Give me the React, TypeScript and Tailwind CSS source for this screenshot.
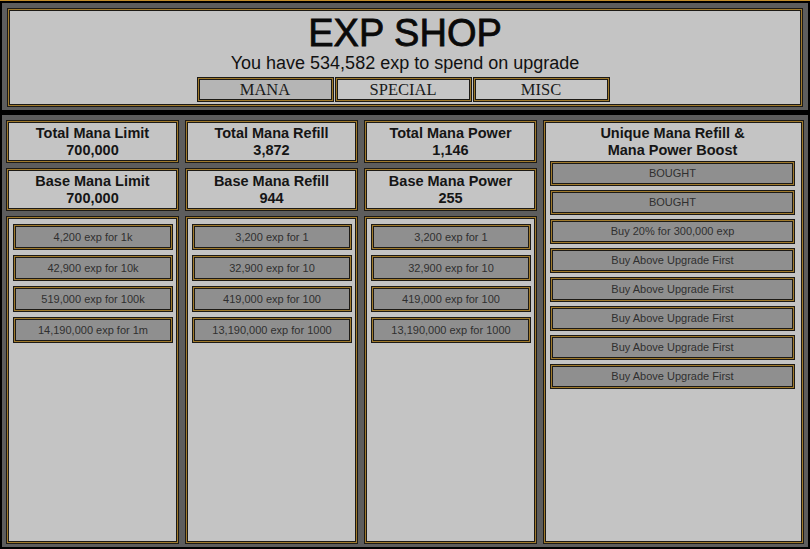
import React from "react";

const frame =
  "border border-[#1c1a16] shadow-[inset_0_0_0_1px_#a07a2c,inset_0_0_0_2px_#1c1a16]";

const columns = [
  {
    total: ["Total Mana Limit", "700,000"],
    base: ["Base Mana Limit", "700,000"],
    buys: ["4,200 exp for 1k", "42,900 exp for 10k", "519,000 exp for 100k", "14,190,000 exp for 1m"],
  },
  {
    total: ["Total Mana Refill", "3,872"],
    base: ["Base Mana Refill", "944"],
    buys: ["3,200 exp for 1", "32,900 exp for 10", "419,000 exp for 100", "13,190,000 exp for 1000"],
  },
  {
    total: ["Total Mana Power", "1,146"],
    base: ["Base Mana Power", "255"],
    buys: ["3,200 exp for 1", "32,900 exp for 10", "419,000 exp for 100", "13,190,000 exp for 1000"],
  },
];

const unique = [
  "BOUGHT",
  "BOUGHT",
  "Buy 20% for 300,000 exp",
  "Buy Above Upgrade First",
  "Buy Above Upgrade First",
  "Buy Above Upgrade First",
  "Buy Above Upgrade First",
  "Buy Above Upgrade First",
];

function StatBox({ label, value }: { label: string; value: string }) {
  return (
    <div
      className={`${frame} bg-[#c4c4c4] h-[43px] flex flex-col items-center justify-center pt-px text-[14.5px] font-bold leading-[17px] text-[#151515]`}
    >
      <span>{label}</span>
      <span>{value}</span>
    </div>
  );
}

function BuyButton({ text, h }: { text: string; h: string }) {
  return (
    <button
      className={`${frame} bg-[#8f8f8f] ${h} w-full flex items-center justify-center text-[11px] text-[#2f2f2f]`}
    >
      {text}
    </button>
  );
}

export default function App() {
  return (
    <div
      className="w-[810px] h-[549px] bg-black flex flex-col overflow-hidden"
      style={{ fontFamily: '"Liberation Sans", Arial, sans-serif' }}
    >
      <div className="h-px bg-[#c28c2a]" />
      <div className="h-[2px]" />

      {/* header */}
      <div className="mx-[2px] bg-[#5d5d5d] px-[5px] pt-[5px] pb-[3px]">
        <div className={`${frame} bg-[#c4c4c4] h-[99px] flex flex-col items-center pt-[5px]`}>
          <h1 className="text-[38px] leading-[38px] text-[#0a0a0a] [-webkit-text-stroke:0.8px_#0a0a0a]">
            EXP SHOP
          </h1>
          <p className="text-[18px] leading-[22px] text-[#111]">
            You have 534,582 exp to spend on upgrade
          </p>
          <div className="flex gap-px mt-[3px] mr-[4px]">
            {["MANA", "SPECIAL", "MISC"].map((t, i) => (
              <button
                key={t}
                className={`${frame} ${i === 0 ? "bg-[#b5b5b5]" : "bg-[#c6c6c6]"} w-[137px] h-[25px] flex items-center justify-center pt-[2px] text-[16.5px] text-[#1a1a1a]`}
                style={{ fontFamily: '"Liberation Serif", "Times New Roman", serif' }}
              >
                {t}
              </button>
            ))}
          </div>
        </div>
      </div>

      {/* shop columns */}
      <div className="mx-[2px] mt-[5px] mb-[2px] flex-1 bg-[#5d5d5d] px-[4px] pt-[5px] pb-[3px] grid grid-cols-[173px_173px_173px_1fr] gap-[6px]">
        {columns.map((c) => (
          <div key={c.total[0]} className="flex flex-col gap-[5px]">
            <StatBox label={c.total[0]} value={c.total[1]} />
            <StatBox label={c.base[0]} value={c.base[1]} />
            <div className={`${frame} bg-[#c4c4c4] flex-1 flex flex-col gap-[5px] pl-[6px] pr-[5px] pt-[7px]`}>
              {c.buys.map((b) => (
                <BuyButton key={b} text={b} h="h-[26px]" />
              ))}
            </div>
          </div>
        ))}

        <div className={`${frame} bg-[#c4c4c4] flex flex-col pl-[6px] pr-[8px] pt-[4px]`}>
          <div className="text-center text-[14.5px] font-bold leading-[17px] text-[#151515] mb-[2px]">
            Unique Mana Refill &amp;
            <br />
            Mana Power Boost
          </div>
          <div className="flex flex-col gap-[4px]">
            {unique.map((u, i) => (
              <BuyButton key={i} text={u} h="h-[25px]" />
            ))}
          </div>
        </div>
      </div>
    </div>
  );
}
